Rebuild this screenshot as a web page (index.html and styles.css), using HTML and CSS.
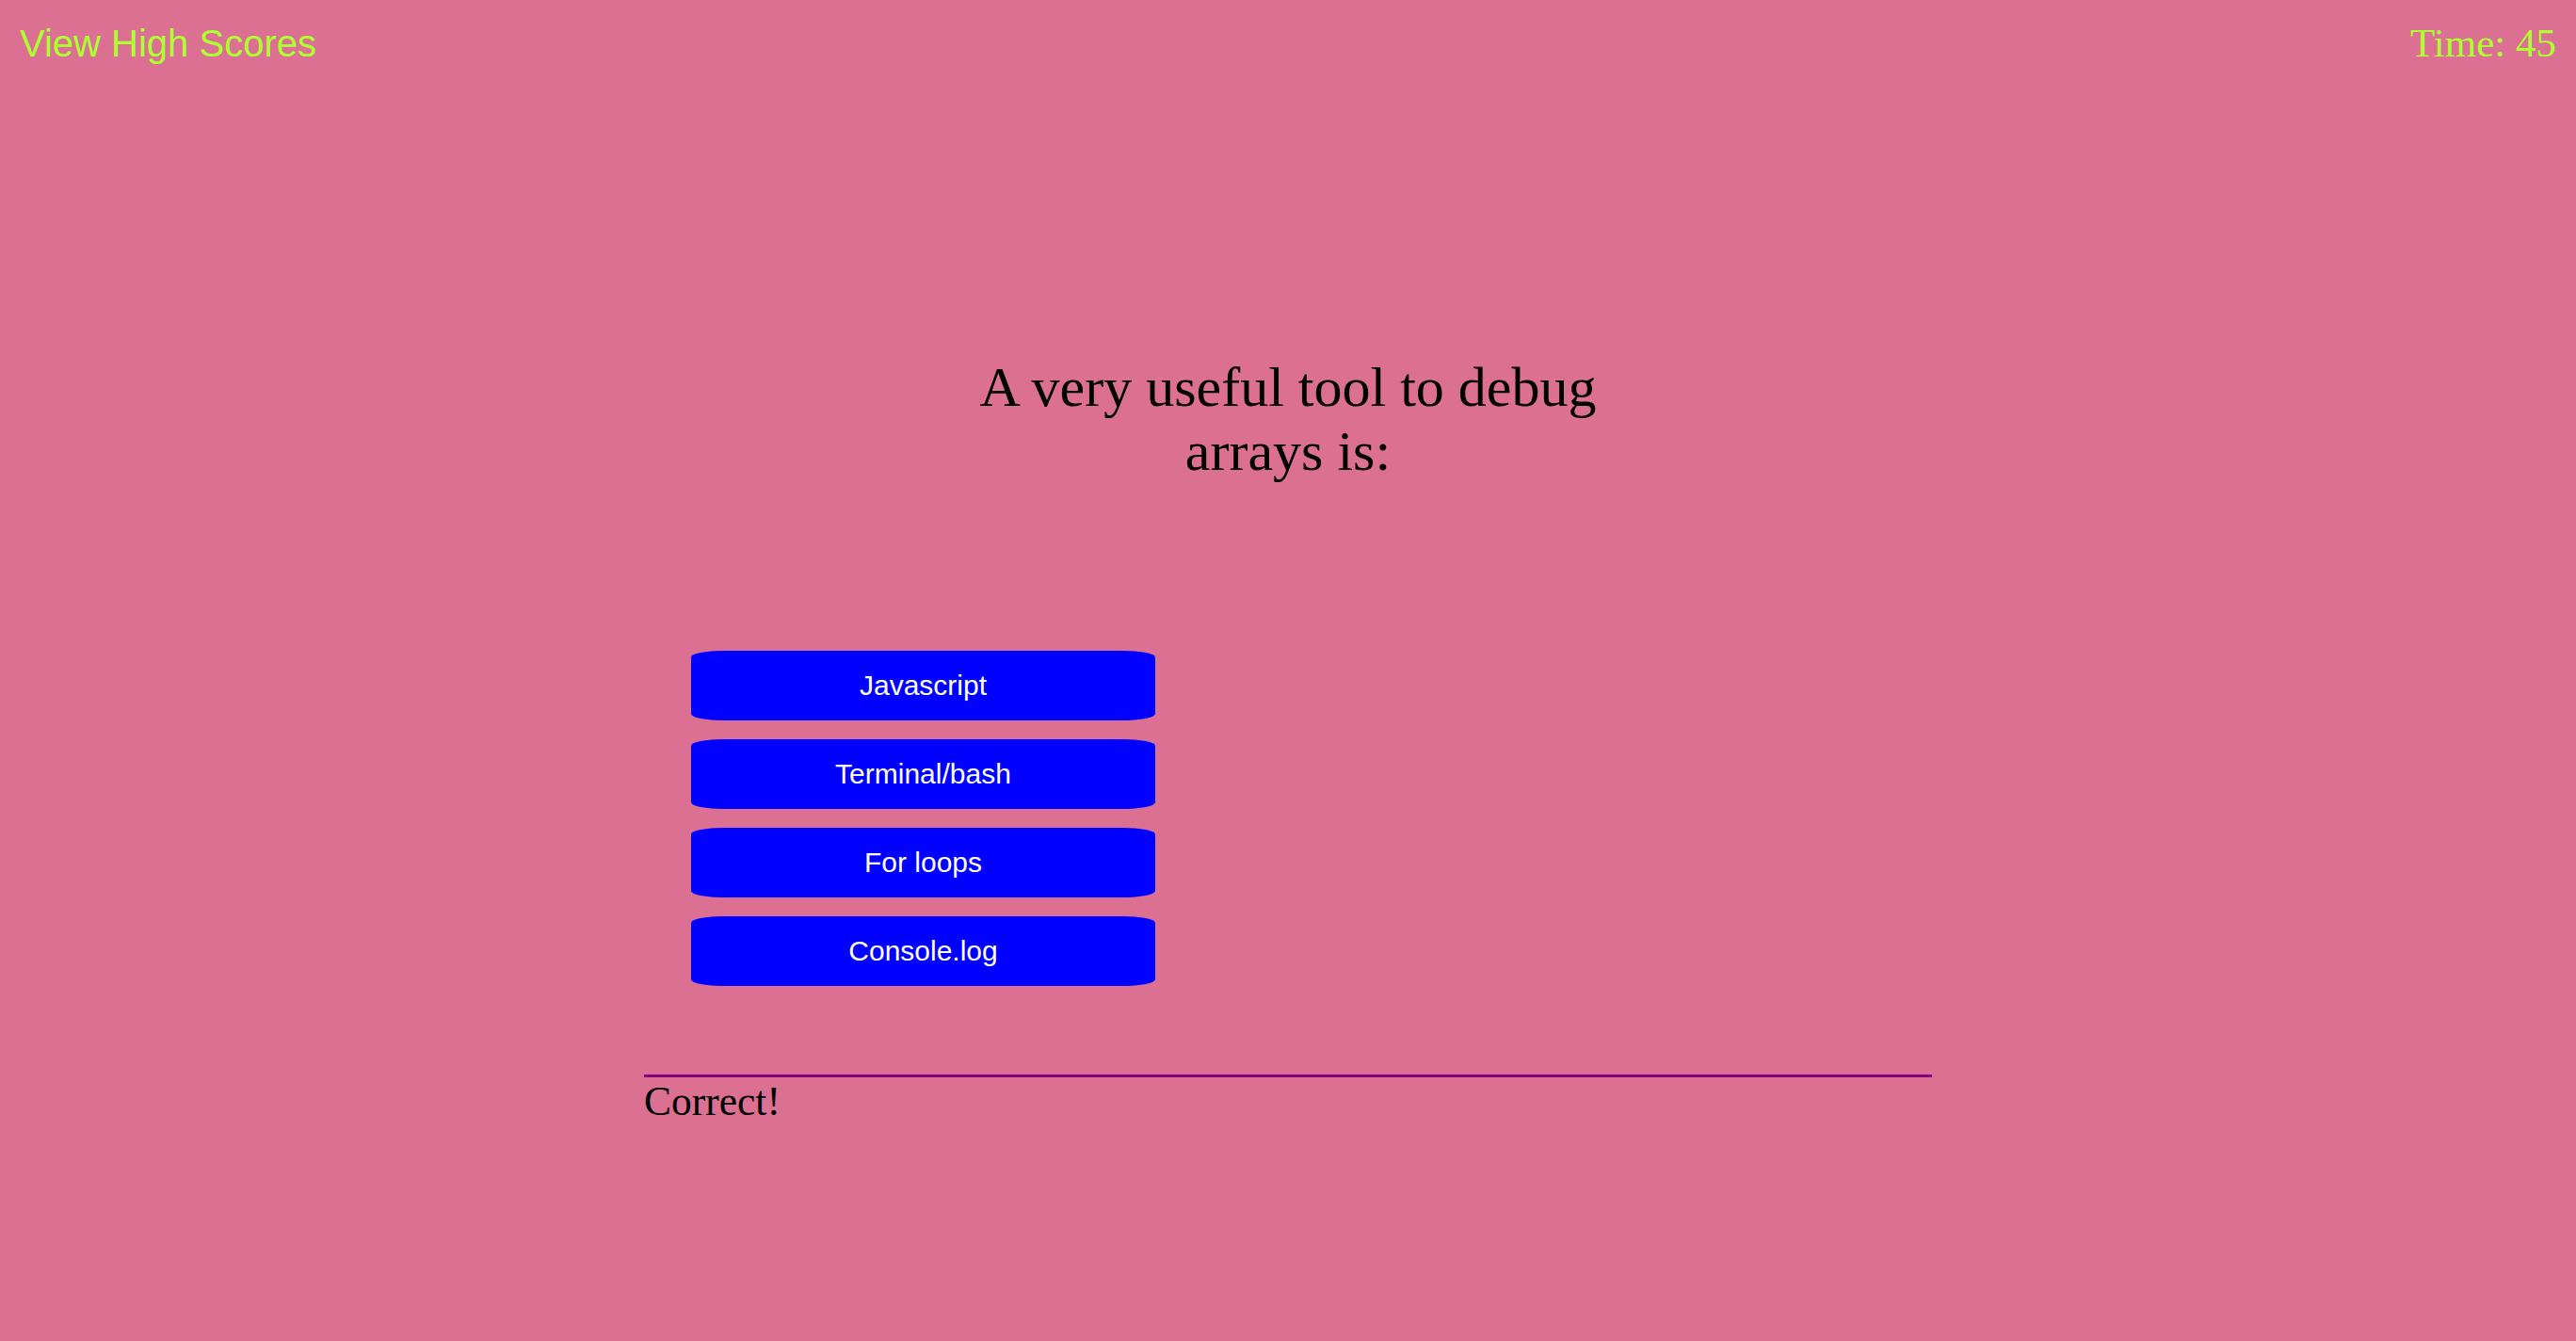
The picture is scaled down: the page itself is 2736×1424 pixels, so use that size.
FILE: index.html
```html
<!DOCTYPE html>
<html lang="en">
<head>
<meta charset="utf-8">
<title>Code Quiz</title>
<link rel="stylesheet" href="styles.css">
</head>
<body>
<header class="top-bar">
  <a class="high-scores" href="#">View High Scores</a>
  <div class="timer">Time: 45</div>
</header>
<main class="quiz">
  <h1 class="question">A very useful tool to debug arrays is:</h1>
  <div class="choices">
    <button class="choice">Javascript</button>
    <button class="choice">Terminal/bash</button>
    <button class="choice">For loops</button>
    <button class="choice">Console.log</button>
  </div>
  <div class="result">Correct!</div>
</main>
</body>
</html>
```
FILE: styles.css
```css
html, body {
  margin: 0;
  padding: 0;
  background: #db7093;
  width: 2736px;
  height: 1424px;
  overflow: hidden;
}

body {
  font-family: "Liberation Serif", "Times New Roman", serif;
  color: #000;
}

.top-bar {
  display: flex;
  justify-content: space-between;
  align-items: baseline;
  height: 70px;
  padding: 21px 21px 0 21px;
  box-sizing: border-box;
}

.high-scores {
  font-family: "Liberation Sans", Arial, sans-serif;
  font-size: 40px;
  color: #adff2f;
  text-decoration: none;
}

.timer {
  font-family: "Liberation Serif", "Times New Roman", serif;
  font-size: 43px;
  color: #adff2f;
}

.quiz {
  width: 50%;
  margin: 0 auto;
}

.question {
  max-width: 720px;
  margin: 307px auto 0 auto;
  font-size: 60px;
  line-height: 68px;
  font-weight: normal;
  text-align: center;
}

.choices {
  display: flex;
  flex-direction: column;
  gap: 20px;
  margin-top: 178px;
  padding-left: 50px;
}

.choice {
  width: 493px;
  height: 74px;
  border: none;
  border-radius: 35px / 7px;
  background: #0000ff;
  color: #fff;
  font-family: "Liberation Sans", Arial, sans-serif;
  font-size: 30px;
  padding: 0;
  cursor: pointer;
}

.result {
  margin-top: 94px;
  border-top: 3px solid #800080;
  padding-top: 1px;
  font-size: 43.5px;
  line-height: 48px;
}
```
